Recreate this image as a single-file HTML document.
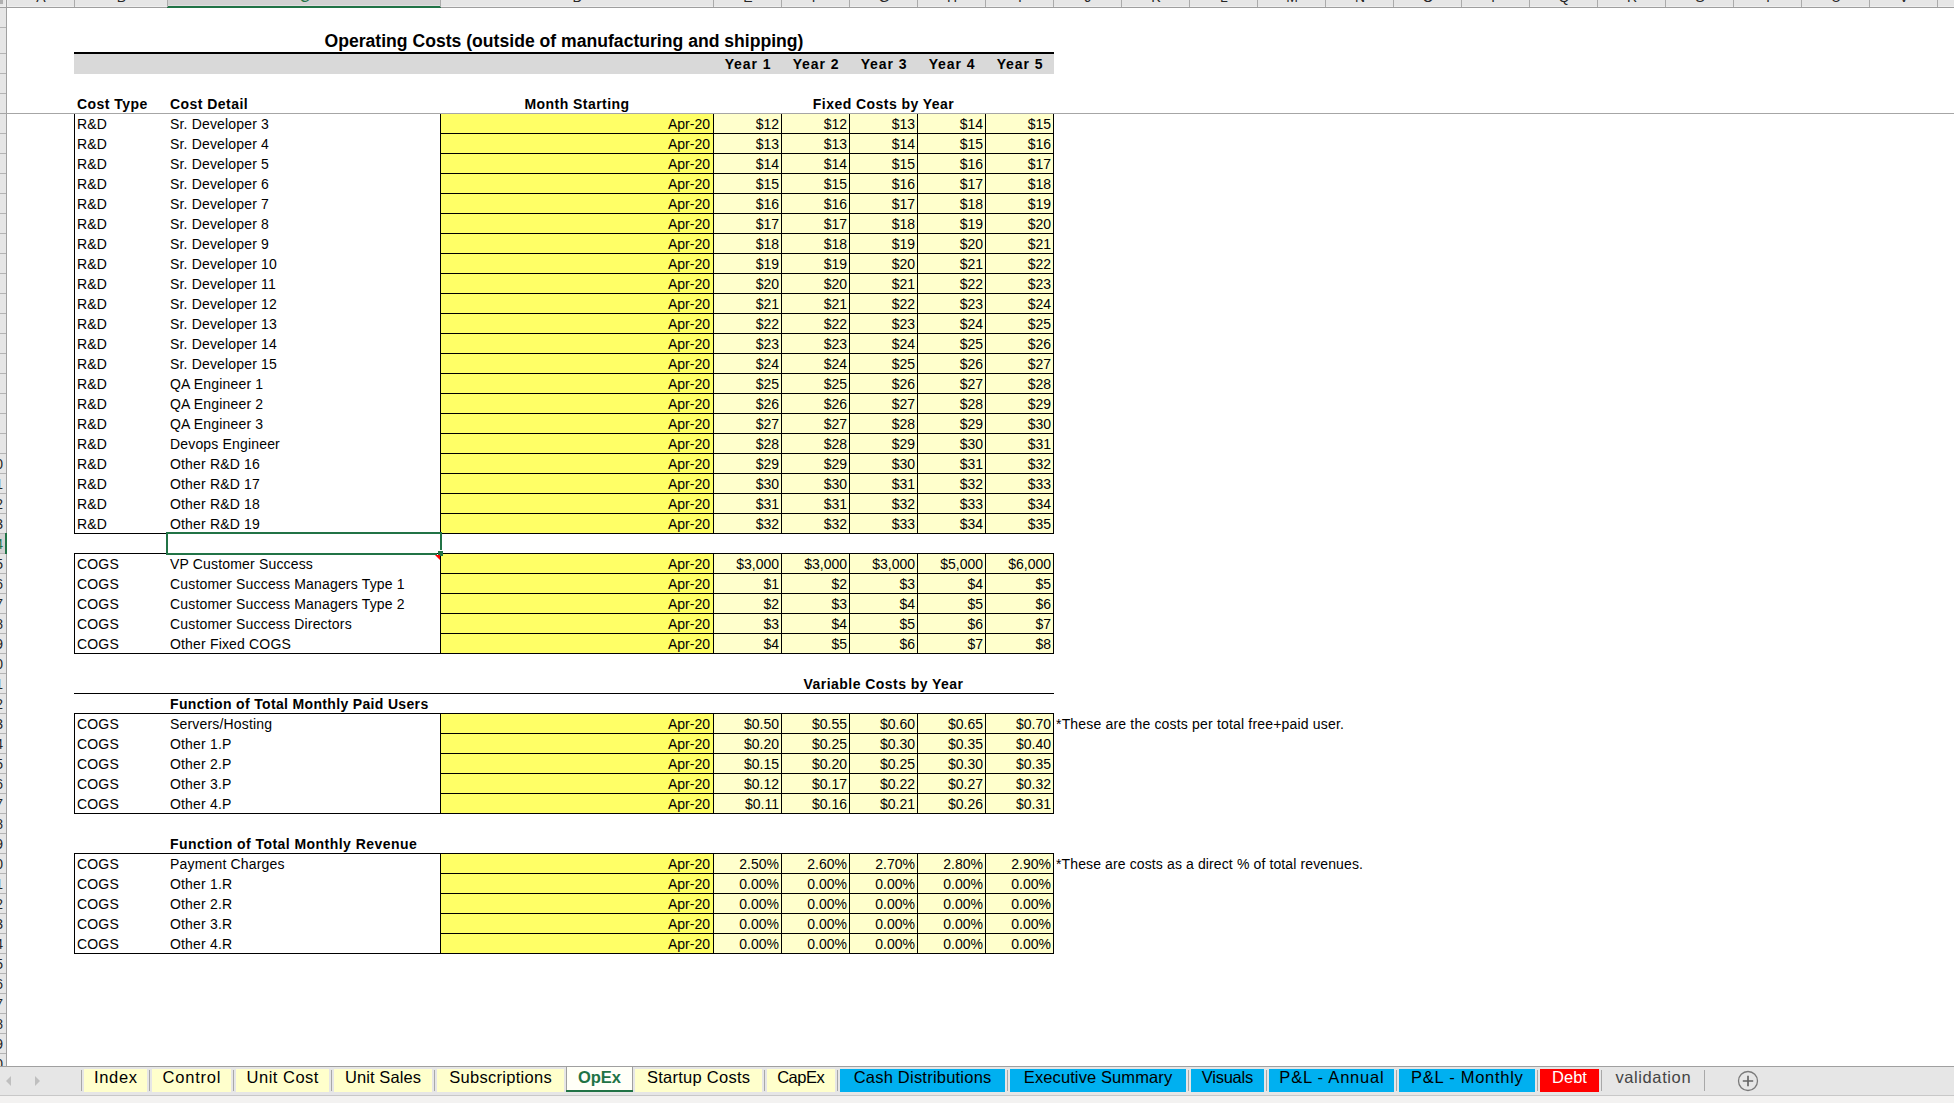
<!DOCTYPE html>
<html><head><meta charset="utf-8"><style>
html,body{margin:0;padding:0;}
body{width:1954px;height:1103px;overflow:hidden;position:relative;background:#fff;font-family:"Liberation Sans",sans-serif;}
body div{position:absolute;white-space:nowrap;overflow:visible;}
.r{font-size:14px;color:#000;letter-spacing:0.17px;}
.n{font-size:14px;color:#000;}
.b{font-size:14px;font-weight:bold;color:#000;letter-spacing:0.45px;}
.y{font-size:14px;font-weight:bold;color:#000;letter-spacing:0.9px;}
.title{font-size:17.6px;font-weight:bold;color:#000;}
.hdr{font-size:14px;}
.tab{font-size:16.5px;}
</style></head><body>
<div style="left:0px;top:0px;width:1954px;height:7px;background:#E6E6E6;"></div>
<div style="left:0px;top:6px;width:1954px;height:1px;background:#EFEFEF;"></div>
<div style="left:0px;top:7px;width:1954px;height:1px;background:#9E9E9E;"></div>
<div style="left:0px;top:0px;width:3px;height:4px;background:#B0B0B0;"></div>
<div style="left:3px;top:4px;width:2px;height:2px;background:#EAEAEA;"></div>
<div style="left:6px;top:0px;width:1px;height:8px;background:#A0A0A0;"></div>
<div style="left:5px;top:0px;width:1px;height:6px;background:#EDEDED;"></div>
<div style="left:7px;top:0px;width:1px;height:6px;background:#EDEDED;"></div>
<div style="left:168px;top:0px;width:272px;height:6px;background:#D2D2D2;"></div>
<div style="left:168px;top:5px;width:272px;height:1px;background:#E1DFDF;"></div>
<div style="left:167px;top:6px;width:274px;height:2px;background:#217346;"></div>
<div style="left:74px;top:0px;width:1px;height:7px;background:#ABABAB;"></div>
<div style="left:167px;top:0px;width:1px;height:7px;background:#ABABAB;"></div>
<div style="left:440px;top:0px;width:1px;height:7px;background:#ABABAB;"></div>
<div style="left:713px;top:0px;width:1px;height:7px;background:#ABABAB;"></div>
<div style="left:781px;top:0px;width:1px;height:7px;background:#ABABAB;"></div>
<div style="left:849px;top:0px;width:1px;height:7px;background:#ABABAB;"></div>
<div style="left:917px;top:0px;width:1px;height:7px;background:#ABABAB;"></div>
<div style="left:985px;top:0px;width:1px;height:7px;background:#ABABAB;"></div>
<div style="left:1053px;top:0px;width:1px;height:7px;background:#ABABAB;"></div>
<div style="left:1121px;top:0px;width:1px;height:7px;background:#ABABAB;"></div>
<div style="left:1189px;top:0px;width:1px;height:7px;background:#ABABAB;"></div>
<div style="left:1257px;top:0px;width:1px;height:7px;background:#ABABAB;"></div>
<div style="left:1325px;top:0px;width:1px;height:7px;background:#ABABAB;"></div>
<div style="left:1393px;top:0px;width:1px;height:7px;background:#ABABAB;"></div>
<div style="left:1461px;top:0px;width:1px;height:7px;background:#ABABAB;"></div>
<div style="left:1529px;top:0px;width:1px;height:7px;background:#ABABAB;"></div>
<div style="left:1597px;top:0px;width:1px;height:7px;background:#ABABAB;"></div>
<div style="left:1665px;top:0px;width:1px;height:7px;background:#ABABAB;"></div>
<div style="left:1733px;top:0px;width:1px;height:7px;background:#ABABAB;"></div>
<div style="left:1801px;top:0px;width:1px;height:7px;background:#ABABAB;"></div>
<div style="left:1869px;top:0px;width:1px;height:7px;background:#ABABAB;"></div>
<div style="left:1937px;top:0px;width:1px;height:7px;background:#ABABAB;"></div>
<div style="left:2005px;top:0px;width:1px;height:7px;background:#ABABAB;"></div>
<div class="hdr" style="left:7px;top:-11px;width:68px;height:17px;line-height:17px;text-align:center;color:#262626;">A</div>
<div class="hdr" style="left:75px;top:-11px;width:93px;height:17px;line-height:17px;text-align:center;color:#262626;">B</div>
<div class="hdr" style="left:168px;top:-11px;width:273px;height:17px;line-height:17px;text-align:center;color:#217346;">C</div>
<div class="hdr" style="left:441px;top:-11px;width:273px;height:17px;line-height:17px;text-align:center;color:#262626;">D</div>
<div class="hdr" style="left:714px;top:-11px;width:68px;height:17px;line-height:17px;text-align:center;color:#262626;">E</div>
<div class="hdr" style="left:782px;top:-11px;width:68px;height:17px;line-height:17px;text-align:center;color:#262626;">F</div>
<div class="hdr" style="left:850px;top:-11px;width:68px;height:17px;line-height:17px;text-align:center;color:#262626;">G</div>
<div class="hdr" style="left:918px;top:-11px;width:68px;height:17px;line-height:17px;text-align:center;color:#262626;">H</div>
<div class="hdr" style="left:986px;top:-11px;width:68px;height:17px;line-height:17px;text-align:center;color:#262626;">I</div>
<div class="hdr" style="left:1054px;top:-11px;width:68px;height:17px;line-height:17px;text-align:center;color:#262626;">J</div>
<div class="hdr" style="left:1122px;top:-11px;width:68px;height:17px;line-height:17px;text-align:center;color:#262626;">K</div>
<div class="hdr" style="left:1190px;top:-11px;width:68px;height:17px;line-height:17px;text-align:center;color:#262626;">L</div>
<div class="hdr" style="left:1258px;top:-11px;width:68px;height:17px;line-height:17px;text-align:center;color:#262626;">M</div>
<div class="hdr" style="left:1326px;top:-11px;width:68px;height:17px;line-height:17px;text-align:center;color:#262626;">N</div>
<div class="hdr" style="left:1394px;top:-11px;width:68px;height:17px;line-height:17px;text-align:center;color:#262626;">O</div>
<div class="hdr" style="left:1462px;top:-11px;width:68px;height:17px;line-height:17px;text-align:center;color:#262626;">P</div>
<div class="hdr" style="left:1530px;top:-11px;width:68px;height:17px;line-height:17px;text-align:center;color:#262626;">Q</div>
<div class="hdr" style="left:1598px;top:-11px;width:68px;height:17px;line-height:17px;text-align:center;color:#262626;">R</div>
<div class="hdr" style="left:1666px;top:-11px;width:68px;height:17px;line-height:17px;text-align:center;color:#262626;">S</div>
<div class="hdr" style="left:1734px;top:-11px;width:68px;height:17px;line-height:17px;text-align:center;color:#262626;">T</div>
<div class="hdr" style="left:1802px;top:-11px;width:68px;height:17px;line-height:17px;text-align:center;color:#262626;">U</div>
<div class="hdr" style="left:1870px;top:-11px;width:68px;height:17px;line-height:17px;text-align:center;color:#262626;">V</div>
<div class="hdr" style="left:1938px;top:-11px;width:68px;height:17px;line-height:17px;text-align:center;color:#262626;">W</div>
<div style="left:0px;top:8px;width:6px;height:1058px;background:#E6E6E6;"></div>
<div style="left:6px;top:8px;width:1px;height:1058px;background:#A0A0A0;"></div>
<div style="left:0px;top:27px;width:6px;height:1px;background:#B4B4B4;"></div>
<div style="left:0px;top:53px;width:6px;height:1px;background:#B4B4B4;"></div>
<div style="left:0px;top:73px;width:6px;height:1px;background:#B4B4B4;"></div>
<div style="left:0px;top:93px;width:6px;height:1px;background:#B4B4B4;"></div>
<div style="left:0px;top:113px;width:6px;height:1px;background:#B4B4B4;"></div>
<div style="left:0px;top:133px;width:6px;height:1px;background:#B4B4B4;"></div>
<div style="left:0px;top:153px;width:6px;height:1px;background:#B4B4B4;"></div>
<div style="left:0px;top:173px;width:6px;height:1px;background:#B4B4B4;"></div>
<div style="left:0px;top:193px;width:6px;height:1px;background:#B4B4B4;"></div>
<div style="left:0px;top:213px;width:6px;height:1px;background:#B4B4B4;"></div>
<div style="left:0px;top:233px;width:6px;height:1px;background:#B4B4B4;"></div>
<div style="left:0px;top:253px;width:6px;height:1px;background:#B4B4B4;"></div>
<div style="left:0px;top:273px;width:6px;height:1px;background:#B4B4B4;"></div>
<div style="left:0px;top:293px;width:6px;height:1px;background:#B4B4B4;"></div>
<div style="left:0px;top:313px;width:6px;height:1px;background:#B4B4B4;"></div>
<div style="left:0px;top:333px;width:6px;height:1px;background:#B4B4B4;"></div>
<div style="left:0px;top:353px;width:6px;height:1px;background:#B4B4B4;"></div>
<div style="left:0px;top:373px;width:6px;height:1px;background:#B4B4B4;"></div>
<div style="left:0px;top:393px;width:6px;height:1px;background:#B4B4B4;"></div>
<div style="left:0px;top:413px;width:6px;height:1px;background:#B4B4B4;"></div>
<div style="left:0px;top:433px;width:6px;height:1px;background:#B4B4B4;"></div>
<div style="left:0px;top:453px;width:6px;height:1px;background:#B4B4B4;"></div>
<div style="left:0px;top:473px;width:6px;height:1px;background:#B4B4B4;"></div>
<div style="left:0px;top:493px;width:6px;height:1px;background:#B4B4B4;"></div>
<div style="left:0px;top:513px;width:6px;height:1px;background:#B4B4B4;"></div>
<div style="left:0px;top:533px;width:6px;height:1px;background:#B4B4B4;"></div>
<div style="left:0px;top:553px;width:6px;height:1px;background:#B4B4B4;"></div>
<div style="left:0px;top:573px;width:6px;height:1px;background:#B4B4B4;"></div>
<div style="left:0px;top:593px;width:6px;height:1px;background:#B4B4B4;"></div>
<div style="left:0px;top:613px;width:6px;height:1px;background:#B4B4B4;"></div>
<div style="left:0px;top:633px;width:6px;height:1px;background:#B4B4B4;"></div>
<div style="left:0px;top:653px;width:6px;height:1px;background:#B4B4B4;"></div>
<div style="left:0px;top:673px;width:6px;height:1px;background:#B4B4B4;"></div>
<div style="left:0px;top:693px;width:6px;height:1px;background:#B4B4B4;"></div>
<div style="left:0px;top:713px;width:6px;height:1px;background:#B4B4B4;"></div>
<div style="left:0px;top:733px;width:6px;height:1px;background:#B4B4B4;"></div>
<div style="left:0px;top:753px;width:6px;height:1px;background:#B4B4B4;"></div>
<div style="left:0px;top:773px;width:6px;height:1px;background:#B4B4B4;"></div>
<div style="left:0px;top:793px;width:6px;height:1px;background:#B4B4B4;"></div>
<div style="left:0px;top:813px;width:6px;height:1px;background:#B4B4B4;"></div>
<div style="left:0px;top:833px;width:6px;height:1px;background:#B4B4B4;"></div>
<div style="left:0px;top:853px;width:6px;height:1px;background:#B4B4B4;"></div>
<div style="left:0px;top:873px;width:6px;height:1px;background:#B4B4B4;"></div>
<div style="left:0px;top:893px;width:6px;height:1px;background:#B4B4B4;"></div>
<div style="left:0px;top:913px;width:6px;height:1px;background:#B4B4B4;"></div>
<div style="left:0px;top:933px;width:6px;height:1px;background:#B4B4B4;"></div>
<div style="left:0px;top:953px;width:6px;height:1px;background:#B4B4B4;"></div>
<div style="left:0px;top:973px;width:6px;height:1px;background:#B4B4B4;"></div>
<div style="left:0px;top:993px;width:6px;height:1px;background:#B4B4B4;"></div>
<div style="left:0px;top:1013px;width:6px;height:1px;background:#B4B4B4;"></div>
<div style="left:0px;top:1033px;width:6px;height:1px;background:#B4B4B4;"></div>
<div style="left:0px;top:1053px;width:6px;height:1px;background:#B4B4B4;"></div>
<div style="left:0px;top:534px;width:5px;height:19px;background:#D2D2D2;"></div>
<div style="left:5px;top:533px;width:2px;height:21px;background:#217346;"></div>
<div style="left:0;top:8px;width:6px;height:1058px;overflow:hidden">
<div class="hdr" style="left:-41px;top:446px;width:44px;height:20px;line-height:20px;text-align:right;color:#262626">100</div>
<div class="hdr" style="left:-41px;top:466px;width:44px;height:20px;line-height:20px;text-align:right;color:#262626">101</div>
<div class="hdr" style="left:-41px;top:486px;width:44px;height:20px;line-height:20px;text-align:right;color:#262626">102</div>
<div class="hdr" style="left:-41px;top:506px;width:44px;height:20px;line-height:20px;text-align:right;color:#262626">103</div>
<div class="hdr" style="left:-41px;top:526px;width:44px;height:20px;line-height:20px;text-align:right;color:#217346">104</div>
<div class="hdr" style="left:-41px;top:546px;width:44px;height:20px;line-height:20px;text-align:right;color:#262626">105</div>
<div class="hdr" style="left:-41px;top:566px;width:44px;height:20px;line-height:20px;text-align:right;color:#262626">106</div>
<div class="hdr" style="left:-41px;top:586px;width:44px;height:20px;line-height:20px;text-align:right;color:#262626">107</div>
<div class="hdr" style="left:-41px;top:606px;width:44px;height:20px;line-height:20px;text-align:right;color:#262626">108</div>
<div class="hdr" style="left:-41px;top:626px;width:44px;height:20px;line-height:20px;text-align:right;color:#262626">109</div>
<div class="hdr" style="left:-41px;top:646px;width:44px;height:20px;line-height:20px;text-align:right;color:#262626">110</div>
<div class="hdr" style="left:-41px;top:666px;width:44px;height:20px;line-height:20px;text-align:right;color:#262626">111</div>
<div class="hdr" style="left:-41px;top:686px;width:44px;height:20px;line-height:20px;text-align:right;color:#262626">112</div>
<div class="hdr" style="left:-41px;top:706px;width:44px;height:20px;line-height:20px;text-align:right;color:#262626">113</div>
<div class="hdr" style="left:-41px;top:726px;width:44px;height:20px;line-height:20px;text-align:right;color:#262626">114</div>
<div class="hdr" style="left:-41px;top:746px;width:44px;height:20px;line-height:20px;text-align:right;color:#262626">115</div>
<div class="hdr" style="left:-41px;top:766px;width:44px;height:20px;line-height:20px;text-align:right;color:#262626">116</div>
<div class="hdr" style="left:-41px;top:786px;width:44px;height:20px;line-height:20px;text-align:right;color:#262626">117</div>
<div class="hdr" style="left:-41px;top:806px;width:44px;height:20px;line-height:20px;text-align:right;color:#262626">118</div>
<div class="hdr" style="left:-41px;top:826px;width:44px;height:20px;line-height:20px;text-align:right;color:#262626">119</div>
<div class="hdr" style="left:-41px;top:846px;width:44px;height:20px;line-height:20px;text-align:right;color:#262626">120</div>
<div class="hdr" style="left:-41px;top:866px;width:44px;height:20px;line-height:20px;text-align:right;color:#262626">121</div>
<div class="hdr" style="left:-41px;top:886px;width:44px;height:20px;line-height:20px;text-align:right;color:#262626">122</div>
<div class="hdr" style="left:-41px;top:906px;width:44px;height:20px;line-height:20px;text-align:right;color:#262626">123</div>
<div class="hdr" style="left:-41px;top:926px;width:44px;height:20px;line-height:20px;text-align:right;color:#262626">124</div>
<div class="hdr" style="left:-41px;top:946px;width:44px;height:20px;line-height:20px;text-align:right;color:#262626">125</div>
<div class="hdr" style="left:-41px;top:966px;width:44px;height:20px;line-height:20px;text-align:right;color:#262626">126</div>
<div class="hdr" style="left:-41px;top:986px;width:44px;height:20px;line-height:20px;text-align:right;color:#262626">127</div>
<div class="hdr" style="left:-41px;top:1006px;width:44px;height:20px;line-height:20px;text-align:right;color:#262626">128</div>
<div class="hdr" style="left:-41px;top:1026px;width:44px;height:20px;line-height:20px;text-align:right;color:#262626">129</div>
<div class="hdr" style="left:-41px;top:1046px;width:44px;height:20px;line-height:20px;text-align:right;color:#262626">130</div>
</div>
<div style="left:0px;top:113px;width:1954px;height:1px;background:#A6A6A6;"></div>
<div class="title" style="left:74px;top:29px;width:980px;height:24px;line-height:24px;text-align:center">Operating Costs (outside of manufacturing and shipping)</div>
<div style="left:74px;top:52px;width:980px;height:2px;background:#000;"></div>
<div style="left:74px;top:54px;width:980px;height:20px;background:#D9D9D9;"></div>
<div class="y" style="left:714px;top:54px;width:68px;height:20px;line-height:20px;text-align:center;">Year 1</div>
<div class="y" style="left:782px;top:54px;width:68px;height:20px;line-height:20px;text-align:center;">Year 2</div>
<div class="y" style="left:850px;top:54px;width:68px;height:20px;line-height:20px;text-align:center;">Year 3</div>
<div class="y" style="left:918px;top:54px;width:68px;height:20px;line-height:20px;text-align:center;">Year 4</div>
<div class="y" style="left:986px;top:54px;width:68px;height:20px;line-height:20px;text-align:center;">Year 5</div>
<div class="b" style="left:77px;top:94px;width:90px;height:20px;line-height:20px;text-align:left;">Cost Type</div>
<div class="b" style="left:170px;top:94px;width:270px;height:20px;line-height:20px;text-align:left;">Cost Detail</div>
<div class="b" style="left:441px;top:94px;width:272px;height:20px;line-height:20px;text-align:center;">Month Starting</div>
<div class="b" style="left:714px;top:94px;width:339px;height:20px;line-height:20px;text-align:center;">Fixed Costs by Year</div>
<div style="left:441px;top:114px;width:272px;height:420px;background:#FFFF66;"></div>
<div style="left:714px;top:114px;width:339px;height:420px;background:#FFFFCC;"></div>
<div style="left:441px;top:133px;width:613px;height:1px;background:#000;"></div>
<div style="left:441px;top:153px;width:613px;height:1px;background:#000;"></div>
<div style="left:441px;top:173px;width:613px;height:1px;background:#000;"></div>
<div style="left:441px;top:193px;width:613px;height:1px;background:#000;"></div>
<div style="left:441px;top:213px;width:613px;height:1px;background:#000;"></div>
<div style="left:441px;top:233px;width:613px;height:1px;background:#000;"></div>
<div style="left:441px;top:253px;width:613px;height:1px;background:#000;"></div>
<div style="left:441px;top:273px;width:613px;height:1px;background:#000;"></div>
<div style="left:441px;top:293px;width:613px;height:1px;background:#000;"></div>
<div style="left:441px;top:313px;width:613px;height:1px;background:#000;"></div>
<div style="left:441px;top:333px;width:613px;height:1px;background:#000;"></div>
<div style="left:441px;top:353px;width:613px;height:1px;background:#000;"></div>
<div style="left:441px;top:373px;width:613px;height:1px;background:#000;"></div>
<div style="left:441px;top:393px;width:613px;height:1px;background:#000;"></div>
<div style="left:441px;top:413px;width:613px;height:1px;background:#000;"></div>
<div style="left:441px;top:433px;width:613px;height:1px;background:#000;"></div>
<div style="left:441px;top:453px;width:613px;height:1px;background:#000;"></div>
<div style="left:441px;top:473px;width:613px;height:1px;background:#000;"></div>
<div style="left:441px;top:493px;width:613px;height:1px;background:#000;"></div>
<div style="left:441px;top:513px;width:613px;height:1px;background:#000;"></div>
<div style="left:441px;top:533px;width:613px;height:1px;background:#000;"></div>
<div style="left:74px;top:533px;width:367px;height:1px;background:#000;"></div>
<div style="left:74px;top:114px;width:1px;height:420px;background:#000;"></div>
<div style="left:440px;top:114px;width:1px;height:420px;background:#000;"></div>
<div style="left:713px;top:114px;width:1px;height:420px;background:#000;"></div>
<div style="left:781px;top:114px;width:1px;height:420px;background:#000;"></div>
<div style="left:849px;top:114px;width:1px;height:420px;background:#000;"></div>
<div style="left:917px;top:114px;width:1px;height:420px;background:#000;"></div>
<div style="left:985px;top:114px;width:1px;height:420px;background:#000;"></div>
<div style="left:1053px;top:114px;width:1px;height:420px;background:#000;"></div>
<div class="r" style="left:77px;top:114px;width:88px;height:20px;line-height:20px;text-align:left;">R&amp;D</div>
<div class="r" style="left:170px;top:114px;width:268px;height:20px;line-height:20px;text-align:left;">Sr. Developer 3</div>
<div class="n" style="left:441px;top:114px;width:269px;height:20px;line-height:20px;text-align:right;">Apr-20</div>
<div class="n" style="left:714px;top:114px;width:65px;height:20px;line-height:20px;text-align:right;">$12</div>
<div class="n" style="left:782px;top:114px;width:65px;height:20px;line-height:20px;text-align:right;">$12</div>
<div class="n" style="left:850px;top:114px;width:65px;height:20px;line-height:20px;text-align:right;">$13</div>
<div class="n" style="left:918px;top:114px;width:65px;height:20px;line-height:20px;text-align:right;">$14</div>
<div class="n" style="left:986px;top:114px;width:65px;height:20px;line-height:20px;text-align:right;">$15</div>
<div class="r" style="left:77px;top:134px;width:88px;height:20px;line-height:20px;text-align:left;">R&amp;D</div>
<div class="r" style="left:170px;top:134px;width:268px;height:20px;line-height:20px;text-align:left;">Sr. Developer 4</div>
<div class="n" style="left:441px;top:134px;width:269px;height:20px;line-height:20px;text-align:right;">Apr-20</div>
<div class="n" style="left:714px;top:134px;width:65px;height:20px;line-height:20px;text-align:right;">$13</div>
<div class="n" style="left:782px;top:134px;width:65px;height:20px;line-height:20px;text-align:right;">$13</div>
<div class="n" style="left:850px;top:134px;width:65px;height:20px;line-height:20px;text-align:right;">$14</div>
<div class="n" style="left:918px;top:134px;width:65px;height:20px;line-height:20px;text-align:right;">$15</div>
<div class="n" style="left:986px;top:134px;width:65px;height:20px;line-height:20px;text-align:right;">$16</div>
<div class="r" style="left:77px;top:154px;width:88px;height:20px;line-height:20px;text-align:left;">R&amp;D</div>
<div class="r" style="left:170px;top:154px;width:268px;height:20px;line-height:20px;text-align:left;">Sr. Developer 5</div>
<div class="n" style="left:441px;top:154px;width:269px;height:20px;line-height:20px;text-align:right;">Apr-20</div>
<div class="n" style="left:714px;top:154px;width:65px;height:20px;line-height:20px;text-align:right;">$14</div>
<div class="n" style="left:782px;top:154px;width:65px;height:20px;line-height:20px;text-align:right;">$14</div>
<div class="n" style="left:850px;top:154px;width:65px;height:20px;line-height:20px;text-align:right;">$15</div>
<div class="n" style="left:918px;top:154px;width:65px;height:20px;line-height:20px;text-align:right;">$16</div>
<div class="n" style="left:986px;top:154px;width:65px;height:20px;line-height:20px;text-align:right;">$17</div>
<div class="r" style="left:77px;top:174px;width:88px;height:20px;line-height:20px;text-align:left;">R&amp;D</div>
<div class="r" style="left:170px;top:174px;width:268px;height:20px;line-height:20px;text-align:left;">Sr. Developer 6</div>
<div class="n" style="left:441px;top:174px;width:269px;height:20px;line-height:20px;text-align:right;">Apr-20</div>
<div class="n" style="left:714px;top:174px;width:65px;height:20px;line-height:20px;text-align:right;">$15</div>
<div class="n" style="left:782px;top:174px;width:65px;height:20px;line-height:20px;text-align:right;">$15</div>
<div class="n" style="left:850px;top:174px;width:65px;height:20px;line-height:20px;text-align:right;">$16</div>
<div class="n" style="left:918px;top:174px;width:65px;height:20px;line-height:20px;text-align:right;">$17</div>
<div class="n" style="left:986px;top:174px;width:65px;height:20px;line-height:20px;text-align:right;">$18</div>
<div class="r" style="left:77px;top:194px;width:88px;height:20px;line-height:20px;text-align:left;">R&amp;D</div>
<div class="r" style="left:170px;top:194px;width:268px;height:20px;line-height:20px;text-align:left;">Sr. Developer 7</div>
<div class="n" style="left:441px;top:194px;width:269px;height:20px;line-height:20px;text-align:right;">Apr-20</div>
<div class="n" style="left:714px;top:194px;width:65px;height:20px;line-height:20px;text-align:right;">$16</div>
<div class="n" style="left:782px;top:194px;width:65px;height:20px;line-height:20px;text-align:right;">$16</div>
<div class="n" style="left:850px;top:194px;width:65px;height:20px;line-height:20px;text-align:right;">$17</div>
<div class="n" style="left:918px;top:194px;width:65px;height:20px;line-height:20px;text-align:right;">$18</div>
<div class="n" style="left:986px;top:194px;width:65px;height:20px;line-height:20px;text-align:right;">$19</div>
<div class="r" style="left:77px;top:214px;width:88px;height:20px;line-height:20px;text-align:left;">R&amp;D</div>
<div class="r" style="left:170px;top:214px;width:268px;height:20px;line-height:20px;text-align:left;">Sr. Developer 8</div>
<div class="n" style="left:441px;top:214px;width:269px;height:20px;line-height:20px;text-align:right;">Apr-20</div>
<div class="n" style="left:714px;top:214px;width:65px;height:20px;line-height:20px;text-align:right;">$17</div>
<div class="n" style="left:782px;top:214px;width:65px;height:20px;line-height:20px;text-align:right;">$17</div>
<div class="n" style="left:850px;top:214px;width:65px;height:20px;line-height:20px;text-align:right;">$18</div>
<div class="n" style="left:918px;top:214px;width:65px;height:20px;line-height:20px;text-align:right;">$19</div>
<div class="n" style="left:986px;top:214px;width:65px;height:20px;line-height:20px;text-align:right;">$20</div>
<div class="r" style="left:77px;top:234px;width:88px;height:20px;line-height:20px;text-align:left;">R&amp;D</div>
<div class="r" style="left:170px;top:234px;width:268px;height:20px;line-height:20px;text-align:left;">Sr. Developer 9</div>
<div class="n" style="left:441px;top:234px;width:269px;height:20px;line-height:20px;text-align:right;">Apr-20</div>
<div class="n" style="left:714px;top:234px;width:65px;height:20px;line-height:20px;text-align:right;">$18</div>
<div class="n" style="left:782px;top:234px;width:65px;height:20px;line-height:20px;text-align:right;">$18</div>
<div class="n" style="left:850px;top:234px;width:65px;height:20px;line-height:20px;text-align:right;">$19</div>
<div class="n" style="left:918px;top:234px;width:65px;height:20px;line-height:20px;text-align:right;">$20</div>
<div class="n" style="left:986px;top:234px;width:65px;height:20px;line-height:20px;text-align:right;">$21</div>
<div class="r" style="left:77px;top:254px;width:88px;height:20px;line-height:20px;text-align:left;">R&amp;D</div>
<div class="r" style="left:170px;top:254px;width:268px;height:20px;line-height:20px;text-align:left;">Sr. Developer 10</div>
<div class="n" style="left:441px;top:254px;width:269px;height:20px;line-height:20px;text-align:right;">Apr-20</div>
<div class="n" style="left:714px;top:254px;width:65px;height:20px;line-height:20px;text-align:right;">$19</div>
<div class="n" style="left:782px;top:254px;width:65px;height:20px;line-height:20px;text-align:right;">$19</div>
<div class="n" style="left:850px;top:254px;width:65px;height:20px;line-height:20px;text-align:right;">$20</div>
<div class="n" style="left:918px;top:254px;width:65px;height:20px;line-height:20px;text-align:right;">$21</div>
<div class="n" style="left:986px;top:254px;width:65px;height:20px;line-height:20px;text-align:right;">$22</div>
<div class="r" style="left:77px;top:274px;width:88px;height:20px;line-height:20px;text-align:left;">R&amp;D</div>
<div class="r" style="left:170px;top:274px;width:268px;height:20px;line-height:20px;text-align:left;">Sr. Developer 11</div>
<div class="n" style="left:441px;top:274px;width:269px;height:20px;line-height:20px;text-align:right;">Apr-20</div>
<div class="n" style="left:714px;top:274px;width:65px;height:20px;line-height:20px;text-align:right;">$20</div>
<div class="n" style="left:782px;top:274px;width:65px;height:20px;line-height:20px;text-align:right;">$20</div>
<div class="n" style="left:850px;top:274px;width:65px;height:20px;line-height:20px;text-align:right;">$21</div>
<div class="n" style="left:918px;top:274px;width:65px;height:20px;line-height:20px;text-align:right;">$22</div>
<div class="n" style="left:986px;top:274px;width:65px;height:20px;line-height:20px;text-align:right;">$23</div>
<div class="r" style="left:77px;top:294px;width:88px;height:20px;line-height:20px;text-align:left;">R&amp;D</div>
<div class="r" style="left:170px;top:294px;width:268px;height:20px;line-height:20px;text-align:left;">Sr. Developer 12</div>
<div class="n" style="left:441px;top:294px;width:269px;height:20px;line-height:20px;text-align:right;">Apr-20</div>
<div class="n" style="left:714px;top:294px;width:65px;height:20px;line-height:20px;text-align:right;">$21</div>
<div class="n" style="left:782px;top:294px;width:65px;height:20px;line-height:20px;text-align:right;">$21</div>
<div class="n" style="left:850px;top:294px;width:65px;height:20px;line-height:20px;text-align:right;">$22</div>
<div class="n" style="left:918px;top:294px;width:65px;height:20px;line-height:20px;text-align:right;">$23</div>
<div class="n" style="left:986px;top:294px;width:65px;height:20px;line-height:20px;text-align:right;">$24</div>
<div class="r" style="left:77px;top:314px;width:88px;height:20px;line-height:20px;text-align:left;">R&amp;D</div>
<div class="r" style="left:170px;top:314px;width:268px;height:20px;line-height:20px;text-align:left;">Sr. Developer 13</div>
<div class="n" style="left:441px;top:314px;width:269px;height:20px;line-height:20px;text-align:right;">Apr-20</div>
<div class="n" style="left:714px;top:314px;width:65px;height:20px;line-height:20px;text-align:right;">$22</div>
<div class="n" style="left:782px;top:314px;width:65px;height:20px;line-height:20px;text-align:right;">$22</div>
<div class="n" style="left:850px;top:314px;width:65px;height:20px;line-height:20px;text-align:right;">$23</div>
<div class="n" style="left:918px;top:314px;width:65px;height:20px;line-height:20px;text-align:right;">$24</div>
<div class="n" style="left:986px;top:314px;width:65px;height:20px;line-height:20px;text-align:right;">$25</div>
<div class="r" style="left:77px;top:334px;width:88px;height:20px;line-height:20px;text-align:left;">R&amp;D</div>
<div class="r" style="left:170px;top:334px;width:268px;height:20px;line-height:20px;text-align:left;">Sr. Developer 14</div>
<div class="n" style="left:441px;top:334px;width:269px;height:20px;line-height:20px;text-align:right;">Apr-20</div>
<div class="n" style="left:714px;top:334px;width:65px;height:20px;line-height:20px;text-align:right;">$23</div>
<div class="n" style="left:782px;top:334px;width:65px;height:20px;line-height:20px;text-align:right;">$23</div>
<div class="n" style="left:850px;top:334px;width:65px;height:20px;line-height:20px;text-align:right;">$24</div>
<div class="n" style="left:918px;top:334px;width:65px;height:20px;line-height:20px;text-align:right;">$25</div>
<div class="n" style="left:986px;top:334px;width:65px;height:20px;line-height:20px;text-align:right;">$26</div>
<div class="r" style="left:77px;top:354px;width:88px;height:20px;line-height:20px;text-align:left;">R&amp;D</div>
<div class="r" style="left:170px;top:354px;width:268px;height:20px;line-height:20px;text-align:left;">Sr. Developer 15</div>
<div class="n" style="left:441px;top:354px;width:269px;height:20px;line-height:20px;text-align:right;">Apr-20</div>
<div class="n" style="left:714px;top:354px;width:65px;height:20px;line-height:20px;text-align:right;">$24</div>
<div class="n" style="left:782px;top:354px;width:65px;height:20px;line-height:20px;text-align:right;">$24</div>
<div class="n" style="left:850px;top:354px;width:65px;height:20px;line-height:20px;text-align:right;">$25</div>
<div class="n" style="left:918px;top:354px;width:65px;height:20px;line-height:20px;text-align:right;">$26</div>
<div class="n" style="left:986px;top:354px;width:65px;height:20px;line-height:20px;text-align:right;">$27</div>
<div class="r" style="left:77px;top:374px;width:88px;height:20px;line-height:20px;text-align:left;">R&amp;D</div>
<div class="r" style="left:170px;top:374px;width:268px;height:20px;line-height:20px;text-align:left;">QA Engineer 1</div>
<div class="n" style="left:441px;top:374px;width:269px;height:20px;line-height:20px;text-align:right;">Apr-20</div>
<div class="n" style="left:714px;top:374px;width:65px;height:20px;line-height:20px;text-align:right;">$25</div>
<div class="n" style="left:782px;top:374px;width:65px;height:20px;line-height:20px;text-align:right;">$25</div>
<div class="n" style="left:850px;top:374px;width:65px;height:20px;line-height:20px;text-align:right;">$26</div>
<div class="n" style="left:918px;top:374px;width:65px;height:20px;line-height:20px;text-align:right;">$27</div>
<div class="n" style="left:986px;top:374px;width:65px;height:20px;line-height:20px;text-align:right;">$28</div>
<div class="r" style="left:77px;top:394px;width:88px;height:20px;line-height:20px;text-align:left;">R&amp;D</div>
<div class="r" style="left:170px;top:394px;width:268px;height:20px;line-height:20px;text-align:left;">QA Engineer 2</div>
<div class="n" style="left:441px;top:394px;width:269px;height:20px;line-height:20px;text-align:right;">Apr-20</div>
<div class="n" style="left:714px;top:394px;width:65px;height:20px;line-height:20px;text-align:right;">$26</div>
<div class="n" style="left:782px;top:394px;width:65px;height:20px;line-height:20px;text-align:right;">$26</div>
<div class="n" style="left:850px;top:394px;width:65px;height:20px;line-height:20px;text-align:right;">$27</div>
<div class="n" style="left:918px;top:394px;width:65px;height:20px;line-height:20px;text-align:right;">$28</div>
<div class="n" style="left:986px;top:394px;width:65px;height:20px;line-height:20px;text-align:right;">$29</div>
<div class="r" style="left:77px;top:414px;width:88px;height:20px;line-height:20px;text-align:left;">R&amp;D</div>
<div class="r" style="left:170px;top:414px;width:268px;height:20px;line-height:20px;text-align:left;">QA Engineer 3</div>
<div class="n" style="left:441px;top:414px;width:269px;height:20px;line-height:20px;text-align:right;">Apr-20</div>
<div class="n" style="left:714px;top:414px;width:65px;height:20px;line-height:20px;text-align:right;">$27</div>
<div class="n" style="left:782px;top:414px;width:65px;height:20px;line-height:20px;text-align:right;">$27</div>
<div class="n" style="left:850px;top:414px;width:65px;height:20px;line-height:20px;text-align:right;">$28</div>
<div class="n" style="left:918px;top:414px;width:65px;height:20px;line-height:20px;text-align:right;">$29</div>
<div class="n" style="left:986px;top:414px;width:65px;height:20px;line-height:20px;text-align:right;">$30</div>
<div class="r" style="left:77px;top:434px;width:88px;height:20px;line-height:20px;text-align:left;">R&amp;D</div>
<div class="r" style="left:170px;top:434px;width:268px;height:20px;line-height:20px;text-align:left;">Devops Engineer</div>
<div class="n" style="left:441px;top:434px;width:269px;height:20px;line-height:20px;text-align:right;">Apr-20</div>
<div class="n" style="left:714px;top:434px;width:65px;height:20px;line-height:20px;text-align:right;">$28</div>
<div class="n" style="left:782px;top:434px;width:65px;height:20px;line-height:20px;text-align:right;">$28</div>
<div class="n" style="left:850px;top:434px;width:65px;height:20px;line-height:20px;text-align:right;">$29</div>
<div class="n" style="left:918px;top:434px;width:65px;height:20px;line-height:20px;text-align:right;">$30</div>
<div class="n" style="left:986px;top:434px;width:65px;height:20px;line-height:20px;text-align:right;">$31</div>
<div class="r" style="left:77px;top:454px;width:88px;height:20px;line-height:20px;text-align:left;">R&amp;D</div>
<div class="r" style="left:170px;top:454px;width:268px;height:20px;line-height:20px;text-align:left;">Other R&amp;D 16</div>
<div class="n" style="left:441px;top:454px;width:269px;height:20px;line-height:20px;text-align:right;">Apr-20</div>
<div class="n" style="left:714px;top:454px;width:65px;height:20px;line-height:20px;text-align:right;">$29</div>
<div class="n" style="left:782px;top:454px;width:65px;height:20px;line-height:20px;text-align:right;">$29</div>
<div class="n" style="left:850px;top:454px;width:65px;height:20px;line-height:20px;text-align:right;">$30</div>
<div class="n" style="left:918px;top:454px;width:65px;height:20px;line-height:20px;text-align:right;">$31</div>
<div class="n" style="left:986px;top:454px;width:65px;height:20px;line-height:20px;text-align:right;">$32</div>
<div class="r" style="left:77px;top:474px;width:88px;height:20px;line-height:20px;text-align:left;">R&amp;D</div>
<div class="r" style="left:170px;top:474px;width:268px;height:20px;line-height:20px;text-align:left;">Other R&amp;D 17</div>
<div class="n" style="left:441px;top:474px;width:269px;height:20px;line-height:20px;text-align:right;">Apr-20</div>
<div class="n" style="left:714px;top:474px;width:65px;height:20px;line-height:20px;text-align:right;">$30</div>
<div class="n" style="left:782px;top:474px;width:65px;height:20px;line-height:20px;text-align:right;">$30</div>
<div class="n" style="left:850px;top:474px;width:65px;height:20px;line-height:20px;text-align:right;">$31</div>
<div class="n" style="left:918px;top:474px;width:65px;height:20px;line-height:20px;text-align:right;">$32</div>
<div class="n" style="left:986px;top:474px;width:65px;height:20px;line-height:20px;text-align:right;">$33</div>
<div class="r" style="left:77px;top:494px;width:88px;height:20px;line-height:20px;text-align:left;">R&amp;D</div>
<div class="r" style="left:170px;top:494px;width:268px;height:20px;line-height:20px;text-align:left;">Other R&amp;D 18</div>
<div class="n" style="left:441px;top:494px;width:269px;height:20px;line-height:20px;text-align:right;">Apr-20</div>
<div class="n" style="left:714px;top:494px;width:65px;height:20px;line-height:20px;text-align:right;">$31</div>
<div class="n" style="left:782px;top:494px;width:65px;height:20px;line-height:20px;text-align:right;">$31</div>
<div class="n" style="left:850px;top:494px;width:65px;height:20px;line-height:20px;text-align:right;">$32</div>
<div class="n" style="left:918px;top:494px;width:65px;height:20px;line-height:20px;text-align:right;">$33</div>
<div class="n" style="left:986px;top:494px;width:65px;height:20px;line-height:20px;text-align:right;">$34</div>
<div class="r" style="left:77px;top:514px;width:88px;height:20px;line-height:20px;text-align:left;">R&amp;D</div>
<div class="r" style="left:170px;top:514px;width:268px;height:20px;line-height:20px;text-align:left;">Other R&amp;D 19</div>
<div class="n" style="left:441px;top:514px;width:269px;height:20px;line-height:20px;text-align:right;">Apr-20</div>
<div class="n" style="left:714px;top:514px;width:65px;height:20px;line-height:20px;text-align:right;">$32</div>
<div class="n" style="left:782px;top:514px;width:65px;height:20px;line-height:20px;text-align:right;">$32</div>
<div class="n" style="left:850px;top:514px;width:65px;height:20px;line-height:20px;text-align:right;">$33</div>
<div class="n" style="left:918px;top:514px;width:65px;height:20px;line-height:20px;text-align:right;">$34</div>
<div class="n" style="left:986px;top:514px;width:65px;height:20px;line-height:20px;text-align:right;">$35</div>
<div style="left:441px;top:554px;width:272px;height:100px;background:#FFFF66;"></div>
<div style="left:714px;top:554px;width:339px;height:100px;background:#FFFFCC;"></div>
<div style="left:74px;top:553px;width:980px;height:1px;background:#000;"></div>
<div style="left:441px;top:573px;width:613px;height:1px;background:#000;"></div>
<div style="left:441px;top:593px;width:613px;height:1px;background:#000;"></div>
<div style="left:441px;top:613px;width:613px;height:1px;background:#000;"></div>
<div style="left:441px;top:633px;width:613px;height:1px;background:#000;"></div>
<div style="left:441px;top:653px;width:613px;height:1px;background:#000;"></div>
<div style="left:74px;top:653px;width:367px;height:1px;background:#000;"></div>
<div style="left:74px;top:553px;width:1px;height:101px;background:#000;"></div>
<div style="left:440px;top:553px;width:1px;height:101px;background:#000;"></div>
<div style="left:713px;top:553px;width:1px;height:101px;background:#000;"></div>
<div style="left:781px;top:553px;width:1px;height:101px;background:#000;"></div>
<div style="left:849px;top:553px;width:1px;height:101px;background:#000;"></div>
<div style="left:917px;top:553px;width:1px;height:101px;background:#000;"></div>
<div style="left:985px;top:553px;width:1px;height:101px;background:#000;"></div>
<div style="left:1053px;top:553px;width:1px;height:101px;background:#000;"></div>
<div class="r" style="left:77px;top:554px;width:88px;height:20px;line-height:20px;text-align:left;">COGS</div>
<div class="r" style="left:170px;top:554px;width:268px;height:20px;line-height:20px;text-align:left;">VP Customer Success</div>
<div class="n" style="left:441px;top:554px;width:269px;height:20px;line-height:20px;text-align:right;">Apr-20</div>
<div class="n" style="left:714px;top:554px;width:65px;height:20px;line-height:20px;text-align:right;">$3,000</div>
<div class="n" style="left:782px;top:554px;width:65px;height:20px;line-height:20px;text-align:right;">$3,000</div>
<div class="n" style="left:850px;top:554px;width:65px;height:20px;line-height:20px;text-align:right;">$3,000</div>
<div class="n" style="left:918px;top:554px;width:65px;height:20px;line-height:20px;text-align:right;">$5,000</div>
<div class="n" style="left:986px;top:554px;width:65px;height:20px;line-height:20px;text-align:right;">$6,000</div>
<div class="r" style="left:77px;top:574px;width:88px;height:20px;line-height:20px;text-align:left;">COGS</div>
<div class="r" style="left:170px;top:574px;width:268px;height:20px;line-height:20px;text-align:left;">Customer Success Managers Type 1</div>
<div class="n" style="left:441px;top:574px;width:269px;height:20px;line-height:20px;text-align:right;">Apr-20</div>
<div class="n" style="left:714px;top:574px;width:65px;height:20px;line-height:20px;text-align:right;">$1</div>
<div class="n" style="left:782px;top:574px;width:65px;height:20px;line-height:20px;text-align:right;">$2</div>
<div class="n" style="left:850px;top:574px;width:65px;height:20px;line-height:20px;text-align:right;">$3</div>
<div class="n" style="left:918px;top:574px;width:65px;height:20px;line-height:20px;text-align:right;">$4</div>
<div class="n" style="left:986px;top:574px;width:65px;height:20px;line-height:20px;text-align:right;">$5</div>
<div class="r" style="left:77px;top:594px;width:88px;height:20px;line-height:20px;text-align:left;">COGS</div>
<div class="r" style="left:170px;top:594px;width:268px;height:20px;line-height:20px;text-align:left;">Customer Success Managers Type 2</div>
<div class="n" style="left:441px;top:594px;width:269px;height:20px;line-height:20px;text-align:right;">Apr-20</div>
<div class="n" style="left:714px;top:594px;width:65px;height:20px;line-height:20px;text-align:right;">$2</div>
<div class="n" style="left:782px;top:594px;width:65px;height:20px;line-height:20px;text-align:right;">$3</div>
<div class="n" style="left:850px;top:594px;width:65px;height:20px;line-height:20px;text-align:right;">$4</div>
<div class="n" style="left:918px;top:594px;width:65px;height:20px;line-height:20px;text-align:right;">$5</div>
<div class="n" style="left:986px;top:594px;width:65px;height:20px;line-height:20px;text-align:right;">$6</div>
<div class="r" style="left:77px;top:614px;width:88px;height:20px;line-height:20px;text-align:left;">COGS</div>
<div class="r" style="left:170px;top:614px;width:268px;height:20px;line-height:20px;text-align:left;">Customer Success Directors</div>
<div class="n" style="left:441px;top:614px;width:269px;height:20px;line-height:20px;text-align:right;">Apr-20</div>
<div class="n" style="left:714px;top:614px;width:65px;height:20px;line-height:20px;text-align:right;">$3</div>
<div class="n" style="left:782px;top:614px;width:65px;height:20px;line-height:20px;text-align:right;">$4</div>
<div class="n" style="left:850px;top:614px;width:65px;height:20px;line-height:20px;text-align:right;">$5</div>
<div class="n" style="left:918px;top:614px;width:65px;height:20px;line-height:20px;text-align:right;">$6</div>
<div class="n" style="left:986px;top:614px;width:65px;height:20px;line-height:20px;text-align:right;">$7</div>
<div class="r" style="left:77px;top:634px;width:88px;height:20px;line-height:20px;text-align:left;">COGS</div>
<div class="r" style="left:170px;top:634px;width:268px;height:20px;line-height:20px;text-align:left;">Other Fixed COGS</div>
<div class="n" style="left:441px;top:634px;width:269px;height:20px;line-height:20px;text-align:right;">Apr-20</div>
<div class="n" style="left:714px;top:634px;width:65px;height:20px;line-height:20px;text-align:right;">$4</div>
<div class="n" style="left:782px;top:634px;width:65px;height:20px;line-height:20px;text-align:right;">$5</div>
<div class="n" style="left:850px;top:634px;width:65px;height:20px;line-height:20px;text-align:right;">$6</div>
<div class="n" style="left:918px;top:634px;width:65px;height:20px;line-height:20px;text-align:right;">$7</div>
<div class="n" style="left:986px;top:634px;width:65px;height:20px;line-height:20px;text-align:right;">$8</div>
<div class="b" style="left:714px;top:674px;width:339px;height:20px;line-height:20px;text-align:center;">Variable Costs by Year</div>
<div style="left:74px;top:693px;width:980px;height:1px;background:#000;"></div>
<div class="b" style="left:170px;top:694px;width:400px;height:20px;line-height:20px;text-align:left;letter-spacing:0.34px;">Function of Total Monthly Paid Users</div>
<div style="left:441px;top:714px;width:272px;height:100px;background:#FFFF66;"></div>
<div style="left:714px;top:714px;width:339px;height:100px;background:#FFFFCC;"></div>
<div style="left:74px;top:713px;width:980px;height:1px;background:#000;"></div>
<div style="left:441px;top:733px;width:613px;height:1px;background:#000;"></div>
<div style="left:441px;top:753px;width:613px;height:1px;background:#000;"></div>
<div style="left:441px;top:773px;width:613px;height:1px;background:#000;"></div>
<div style="left:441px;top:793px;width:613px;height:1px;background:#000;"></div>
<div style="left:441px;top:813px;width:613px;height:1px;background:#000;"></div>
<div style="left:74px;top:813px;width:367px;height:1px;background:#000;"></div>
<div style="left:74px;top:713px;width:1px;height:101px;background:#000;"></div>
<div style="left:440px;top:713px;width:1px;height:101px;background:#000;"></div>
<div style="left:713px;top:713px;width:1px;height:101px;background:#000;"></div>
<div style="left:781px;top:713px;width:1px;height:101px;background:#000;"></div>
<div style="left:849px;top:713px;width:1px;height:101px;background:#000;"></div>
<div style="left:917px;top:713px;width:1px;height:101px;background:#000;"></div>
<div style="left:985px;top:713px;width:1px;height:101px;background:#000;"></div>
<div style="left:1053px;top:713px;width:1px;height:101px;background:#000;"></div>
<div class="r" style="left:77px;top:714px;width:88px;height:20px;line-height:20px;text-align:left;">COGS</div>
<div class="r" style="left:170px;top:714px;width:268px;height:20px;line-height:20px;text-align:left;">Servers/Hosting</div>
<div class="n" style="left:441px;top:714px;width:269px;height:20px;line-height:20px;text-align:right;">Apr-20</div>
<div class="n" style="left:714px;top:714px;width:65px;height:20px;line-height:20px;text-align:right;">$0.50</div>
<div class="n" style="left:782px;top:714px;width:65px;height:20px;line-height:20px;text-align:right;">$0.55</div>
<div class="n" style="left:850px;top:714px;width:65px;height:20px;line-height:20px;text-align:right;">$0.60</div>
<div class="n" style="left:918px;top:714px;width:65px;height:20px;line-height:20px;text-align:right;">$0.65</div>
<div class="n" style="left:986px;top:714px;width:65px;height:20px;line-height:20px;text-align:right;">$0.70</div>
<div class="r" style="left:77px;top:734px;width:88px;height:20px;line-height:20px;text-align:left;">COGS</div>
<div class="r" style="left:170px;top:734px;width:268px;height:20px;line-height:20px;text-align:left;">Other 1.P</div>
<div class="n" style="left:441px;top:734px;width:269px;height:20px;line-height:20px;text-align:right;">Apr-20</div>
<div class="n" style="left:714px;top:734px;width:65px;height:20px;line-height:20px;text-align:right;">$0.20</div>
<div class="n" style="left:782px;top:734px;width:65px;height:20px;line-height:20px;text-align:right;">$0.25</div>
<div class="n" style="left:850px;top:734px;width:65px;height:20px;line-height:20px;text-align:right;">$0.30</div>
<div class="n" style="left:918px;top:734px;width:65px;height:20px;line-height:20px;text-align:right;">$0.35</div>
<div class="n" style="left:986px;top:734px;width:65px;height:20px;line-height:20px;text-align:right;">$0.40</div>
<div class="r" style="left:77px;top:754px;width:88px;height:20px;line-height:20px;text-align:left;">COGS</div>
<div class="r" style="left:170px;top:754px;width:268px;height:20px;line-height:20px;text-align:left;">Other 2.P</div>
<div class="n" style="left:441px;top:754px;width:269px;height:20px;line-height:20px;text-align:right;">Apr-20</div>
<div class="n" style="left:714px;top:754px;width:65px;height:20px;line-height:20px;text-align:right;">$0.15</div>
<div class="n" style="left:782px;top:754px;width:65px;height:20px;line-height:20px;text-align:right;">$0.20</div>
<div class="n" style="left:850px;top:754px;width:65px;height:20px;line-height:20px;text-align:right;">$0.25</div>
<div class="n" style="left:918px;top:754px;width:65px;height:20px;line-height:20px;text-align:right;">$0.30</div>
<div class="n" style="left:986px;top:754px;width:65px;height:20px;line-height:20px;text-align:right;">$0.35</div>
<div class="r" style="left:77px;top:774px;width:88px;height:20px;line-height:20px;text-align:left;">COGS</div>
<div class="r" style="left:170px;top:774px;width:268px;height:20px;line-height:20px;text-align:left;">Other 3.P</div>
<div class="n" style="left:441px;top:774px;width:269px;height:20px;line-height:20px;text-align:right;">Apr-20</div>
<div class="n" style="left:714px;top:774px;width:65px;height:20px;line-height:20px;text-align:right;">$0.12</div>
<div class="n" style="left:782px;top:774px;width:65px;height:20px;line-height:20px;text-align:right;">$0.17</div>
<div class="n" style="left:850px;top:774px;width:65px;height:20px;line-height:20px;text-align:right;">$0.22</div>
<div class="n" style="left:918px;top:774px;width:65px;height:20px;line-height:20px;text-align:right;">$0.27</div>
<div class="n" style="left:986px;top:774px;width:65px;height:20px;line-height:20px;text-align:right;">$0.32</div>
<div class="r" style="left:77px;top:794px;width:88px;height:20px;line-height:20px;text-align:left;">COGS</div>
<div class="r" style="left:170px;top:794px;width:268px;height:20px;line-height:20px;text-align:left;">Other 4.P</div>
<div class="n" style="left:441px;top:794px;width:269px;height:20px;line-height:20px;text-align:right;">Apr-20</div>
<div class="n" style="left:714px;top:794px;width:65px;height:20px;line-height:20px;text-align:right;">$0.11</div>
<div class="n" style="left:782px;top:794px;width:65px;height:20px;line-height:20px;text-align:right;">$0.16</div>
<div class="n" style="left:850px;top:794px;width:65px;height:20px;line-height:20px;text-align:right;">$0.21</div>
<div class="n" style="left:918px;top:794px;width:65px;height:20px;line-height:20px;text-align:right;">$0.26</div>
<div class="n" style="left:986px;top:794px;width:65px;height:20px;line-height:20px;text-align:right;">$0.31</div>
<div class="r" style="left:1056px;top:714px;width:500px;height:20px;line-height:20px;text-align:left;letter-spacing:0.18px;">*These are the costs per total free+paid user.</div>
<div class="b" style="left:170px;top:834px;width:400px;height:20px;line-height:20px;text-align:left;">Function of Total Monthly Revenue</div>
<div style="left:441px;top:854px;width:272px;height:100px;background:#FFFF66;"></div>
<div style="left:714px;top:854px;width:339px;height:100px;background:#FFFFCC;"></div>
<div style="left:74px;top:853px;width:980px;height:1px;background:#000;"></div>
<div style="left:441px;top:873px;width:613px;height:1px;background:#000;"></div>
<div style="left:441px;top:893px;width:613px;height:1px;background:#000;"></div>
<div style="left:441px;top:913px;width:613px;height:1px;background:#000;"></div>
<div style="left:441px;top:933px;width:613px;height:1px;background:#000;"></div>
<div style="left:441px;top:953px;width:613px;height:1px;background:#000;"></div>
<div style="left:74px;top:953px;width:367px;height:1px;background:#000;"></div>
<div style="left:74px;top:853px;width:1px;height:101px;background:#000;"></div>
<div style="left:440px;top:853px;width:1px;height:101px;background:#000;"></div>
<div style="left:713px;top:853px;width:1px;height:101px;background:#000;"></div>
<div style="left:781px;top:853px;width:1px;height:101px;background:#000;"></div>
<div style="left:849px;top:853px;width:1px;height:101px;background:#000;"></div>
<div style="left:917px;top:853px;width:1px;height:101px;background:#000;"></div>
<div style="left:985px;top:853px;width:1px;height:101px;background:#000;"></div>
<div style="left:1053px;top:853px;width:1px;height:101px;background:#000;"></div>
<div class="r" style="left:77px;top:854px;width:88px;height:20px;line-height:20px;text-align:left;">COGS</div>
<div class="r" style="left:170px;top:854px;width:268px;height:20px;line-height:20px;text-align:left;">Payment Charges</div>
<div class="n" style="left:441px;top:854px;width:269px;height:20px;line-height:20px;text-align:right;">Apr-20</div>
<div class="n" style="left:714px;top:854px;width:65px;height:20px;line-height:20px;text-align:right;">2.50%</div>
<div class="n" style="left:782px;top:854px;width:65px;height:20px;line-height:20px;text-align:right;">2.60%</div>
<div class="n" style="left:850px;top:854px;width:65px;height:20px;line-height:20px;text-align:right;">2.70%</div>
<div class="n" style="left:918px;top:854px;width:65px;height:20px;line-height:20px;text-align:right;">2.80%</div>
<div class="n" style="left:986px;top:854px;width:65px;height:20px;line-height:20px;text-align:right;">2.90%</div>
<div class="r" style="left:77px;top:874px;width:88px;height:20px;line-height:20px;text-align:left;">COGS</div>
<div class="r" style="left:170px;top:874px;width:268px;height:20px;line-height:20px;text-align:left;">Other 1.R</div>
<div class="n" style="left:441px;top:874px;width:269px;height:20px;line-height:20px;text-align:right;">Apr-20</div>
<div class="n" style="left:714px;top:874px;width:65px;height:20px;line-height:20px;text-align:right;">0.00%</div>
<div class="n" style="left:782px;top:874px;width:65px;height:20px;line-height:20px;text-align:right;">0.00%</div>
<div class="n" style="left:850px;top:874px;width:65px;height:20px;line-height:20px;text-align:right;">0.00%</div>
<div class="n" style="left:918px;top:874px;width:65px;height:20px;line-height:20px;text-align:right;">0.00%</div>
<div class="n" style="left:986px;top:874px;width:65px;height:20px;line-height:20px;text-align:right;">0.00%</div>
<div class="r" style="left:77px;top:894px;width:88px;height:20px;line-height:20px;text-align:left;">COGS</div>
<div class="r" style="left:170px;top:894px;width:268px;height:20px;line-height:20px;text-align:left;">Other 2.R</div>
<div class="n" style="left:441px;top:894px;width:269px;height:20px;line-height:20px;text-align:right;">Apr-20</div>
<div class="n" style="left:714px;top:894px;width:65px;height:20px;line-height:20px;text-align:right;">0.00%</div>
<div class="n" style="left:782px;top:894px;width:65px;height:20px;line-height:20px;text-align:right;">0.00%</div>
<div class="n" style="left:850px;top:894px;width:65px;height:20px;line-height:20px;text-align:right;">0.00%</div>
<div class="n" style="left:918px;top:894px;width:65px;height:20px;line-height:20px;text-align:right;">0.00%</div>
<div class="n" style="left:986px;top:894px;width:65px;height:20px;line-height:20px;text-align:right;">0.00%</div>
<div class="r" style="left:77px;top:914px;width:88px;height:20px;line-height:20px;text-align:left;">COGS</div>
<div class="r" style="left:170px;top:914px;width:268px;height:20px;line-height:20px;text-align:left;">Other 3.R</div>
<div class="n" style="left:441px;top:914px;width:269px;height:20px;line-height:20px;text-align:right;">Apr-20</div>
<div class="n" style="left:714px;top:914px;width:65px;height:20px;line-height:20px;text-align:right;">0.00%</div>
<div class="n" style="left:782px;top:914px;width:65px;height:20px;line-height:20px;text-align:right;">0.00%</div>
<div class="n" style="left:850px;top:914px;width:65px;height:20px;line-height:20px;text-align:right;">0.00%</div>
<div class="n" style="left:918px;top:914px;width:65px;height:20px;line-height:20px;text-align:right;">0.00%</div>
<div class="n" style="left:986px;top:914px;width:65px;height:20px;line-height:20px;text-align:right;">0.00%</div>
<div class="r" style="left:77px;top:934px;width:88px;height:20px;line-height:20px;text-align:left;">COGS</div>
<div class="r" style="left:170px;top:934px;width:268px;height:20px;line-height:20px;text-align:left;">Other 4.R</div>
<div class="n" style="left:441px;top:934px;width:269px;height:20px;line-height:20px;text-align:right;">Apr-20</div>
<div class="n" style="left:714px;top:934px;width:65px;height:20px;line-height:20px;text-align:right;">0.00%</div>
<div class="n" style="left:782px;top:934px;width:65px;height:20px;line-height:20px;text-align:right;">0.00%</div>
<div class="n" style="left:850px;top:934px;width:65px;height:20px;line-height:20px;text-align:right;">0.00%</div>
<div class="n" style="left:918px;top:934px;width:65px;height:20px;line-height:20px;text-align:right;">0.00%</div>
<div class="n" style="left:986px;top:934px;width:65px;height:20px;line-height:20px;text-align:right;">0.00%</div>
<div class="r" style="left:1056px;top:854px;width:500px;height:20px;line-height:20px;text-align:left;letter-spacing:0.12px;">*These are costs as a direct % of total revenues.</div>
<div style="left:166px;top:532px;width:276px;height:2px;background:#217346;"></div>
<div style="left:166px;top:553px;width:271px;height:2px;background:#217346;"></div>
<div style="left:166px;top:532px;width:2px;height:23px;background:#217346;"></div>
<div style="left:440px;top:532px;width:2px;height:18px;background:#217346;"></div>
<div style="left:438px;top:551px;width:5px;height:5px;background:#217346;"></div>
<svg style="position:absolute;left:434px;top:555px" width="7" height="7"><polygon points="1,0 6,0 6,5" fill="#FF0000"/></svg>
<div style="left:0px;top:1066px;width:1954px;height:1px;background:#A0A0A0;"></div>
<div style="left:0px;top:1067px;width:1954px;height:29px;background:#E6E6E6;"></div>
<div style="left:0px;top:1095px;width:1954px;height:1px;background:#C8C8C8;"></div>
<div style="left:0px;top:1096px;width:1954px;height:7px;background:#F3F2F1;"></div>
<svg style="position:absolute;left:4px;top:1074px" width="40" height="14"><polygon points="2,7 7,2 7,12" fill="#BFBFBF"/><polygon points="31,2 36,7 31,12" fill="#BFBFBF"/></svg>
<div style="left:81px;top:1070px;width:1px;height:21px;background:#A8A8A8;"></div>
<div style="left:149px;top:1070px;width:1px;height:21px;background:#A8A8A8;"></div>
<div style="left:233px;top:1070px;width:1px;height:21px;background:#A8A8A8;"></div>
<div style="left:331px;top:1070px;width:1px;height:21px;background:#A8A8A8;"></div>
<div style="left:434px;top:1070px;width:1px;height:21px;background:#A8A8A8;"></div>
<div style="left:764px;top:1070px;width:1px;height:21px;background:#A8A8A8;"></div>
<div style="left:837px;top:1070px;width:1px;height:21px;background:#A8A8A8;"></div>
<div style="left:1007px;top:1070px;width:1px;height:21px;background:#A8A8A8;"></div>
<div style="left:1188px;top:1070px;width:1px;height:21px;background:#A8A8A8;"></div>
<div style="left:1266px;top:1070px;width:1px;height:21px;background:#A8A8A8;"></div>
<div style="left:1396px;top:1070px;width:1px;height:21px;background:#A8A8A8;"></div>
<div style="left:1537px;top:1070px;width:1px;height:21px;background:#A8A8A8;"></div>
<div style="left:1601px;top:1070px;width:1px;height:21px;background:#A8A8A8;"></div>
<div style="left:1704px;top:1070px;width:1px;height:21px;background:#A8A8A8;"></div>
<div style="left:84px;top:1069px;width:63px;height:23px;background:#FFFFCC;"></div>
<div class="tab" style="left:84px;top:1065px;width:63px;height:24px;line-height:24px;text-align:center;color:#000;letter-spacing:0.65px;text-indent:0.65px;">Index</div>
<div style="left:152px;top:1069px;width:79px;height:23px;background:#FFFFCC;"></div>
<div class="tab" style="left:152px;top:1065px;width:79px;height:24px;line-height:24px;text-align:center;color:#000;letter-spacing:0.77px;text-indent:0.77px;">Control</div>
<div style="left:236px;top:1069px;width:93px;height:23px;background:#FFFFCC;"></div>
<div class="tab" style="left:236px;top:1065px;width:93px;height:24px;line-height:24px;text-align:center;color:#000;letter-spacing:0.49px;text-indent:0.49px;">Unit Cost</div>
<div style="left:334px;top:1069px;width:98px;height:23px;background:#FFFFCC;"></div>
<div class="tab" style="left:334px;top:1065px;width:98px;height:24px;line-height:24px;text-align:center;color:#000;letter-spacing:0.08px;text-indent:0.08px;">Unit Sales</div>
<div style="left:437px;top:1069px;width:127px;height:23px;background:#FFFFCC;"></div>
<div class="tab" style="left:437px;top:1065px;width:127px;height:24px;line-height:24px;text-align:center;color:#000;letter-spacing:0.27px;text-indent:0.27px;">Subscriptions</div>
<div style="left:566px;top:1066px;width:1px;height:26px;background:#A0A0A0;"></div>
<div style="left:632px;top:1066px;width:1px;height:26px;background:#A0A0A0;"></div>
<div style="left:567px;top:1067px;width:65px;height:24px;background:#FFFFF8;"></div>
<div style="left:566px;top:1090px;width:67px;height:2px;background:#217346;"></div>
<div class="tab" style="left:567px;top:1065px;width:65px;height:24px;line-height:24px;text-align:center;color:#217346;font-weight:bold;">OpEx</div>
<div style="left:635px;top:1069px;width:127px;height:23px;background:#FFFFCC;"></div>
<div class="tab" style="left:635px;top:1065px;width:127px;height:24px;line-height:24px;text-align:center;color:#000;letter-spacing:0.27px;text-indent:0.27px;">Startup Costs</div>
<div style="left:767px;top:1069px;width:68px;height:23px;background:#FFFFCC;"></div>
<div class="tab" style="left:767px;top:1065px;width:68px;height:24px;line-height:24px;text-align:center;color:#000;letter-spacing:-0.47px;text-indent:-0.47px;">CapEx</div>
<div style="left:840px;top:1069px;width:165px;height:23px;background:#00B0F0;"></div>
<div class="tab" style="left:840px;top:1065px;width:165px;height:24px;line-height:24px;text-align:center;color:#000;letter-spacing:0.22px;text-indent:0.22px;">Cash Distributions</div>
<div style="left:1010px;top:1069px;width:176px;height:23px;background:#00B0F0;"></div>
<div class="tab" style="left:1010px;top:1065px;width:176px;height:24px;line-height:24px;text-align:center;color:#000;letter-spacing:0.1px;text-indent:0.1px;">Executive Summary</div>
<div style="left:1191px;top:1069px;width:73px;height:23px;background:#00B0F0;"></div>
<div class="tab" style="left:1191px;top:1065px;width:73px;height:24px;line-height:24px;text-align:center;color:#000;letter-spacing:-0.25px;text-indent:-0.25px;">Visuals</div>
<div style="left:1269px;top:1069px;width:125px;height:23px;background:#00B0F0;"></div>
<div class="tab" style="left:1269px;top:1065px;width:125px;height:24px;line-height:24px;text-align:center;color:#000;letter-spacing:0.78px;text-indent:0.78px;">P&amp;L - Annual</div>
<div style="left:1399px;top:1069px;width:136px;height:23px;background:#00B0F0;"></div>
<div class="tab" style="left:1399px;top:1065px;width:136px;height:24px;line-height:24px;text-align:center;color:#000;letter-spacing:0.73px;text-indent:0.73px;">P&amp;L - Monthly</div>
<div style="left:1540px;top:1069px;width:59px;height:23px;background:#FF0000;"></div>
<div class="tab" style="left:1540px;top:1065px;width:59px;height:24px;line-height:24px;text-align:center;color:#FFF;letter-spacing:0px;text-indent:0px;">Debt</div>
<div class="tab" style="left:1604px;top:1065px;width:98px;height:24px;line-height:24px;text-align:center;color:#444;letter-spacing:0.6px;text-indent:0.6px;">validation</div>
<svg style="position:absolute;left:1737px;top:1070px" width="22" height="22"><circle cx="11" cy="11" r="9.5" fill="none" stroke="#7A7A7A" stroke-width="1.3"/><path d="M11 5.8V16.2M5.8 11H16.2" stroke="#666" stroke-width="1.7"/></svg>
</body></html>
